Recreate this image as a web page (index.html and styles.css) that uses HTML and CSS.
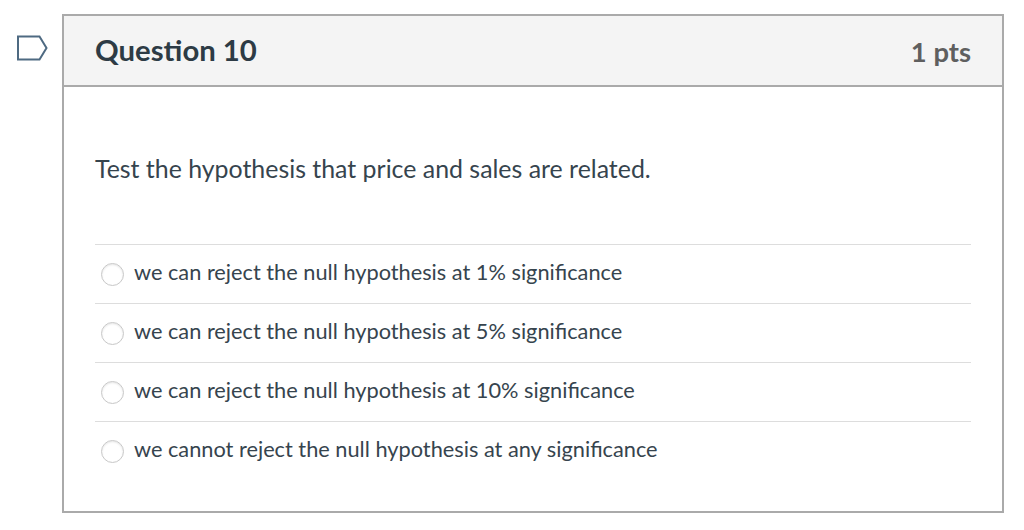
FILE: index.html
```html
<!DOCTYPE html>
<html lang="en">
<head>
    <meta charset="UTF-8">
    <title>Question 10</title>
    <link rel="stylesheet" href="styles.css">
</head>
<body>
    <div class="page">
        <div class="flag">
            <svg width="32" height="26" viewBox="0 0 32 26">
                <path d="M2 1.5H23.5L30.5 13L23.5 24.5H2Z" fill="none" stroke="#4e6a82" stroke-width="2"/>
            </svg>
        </div>
        <div class="question">
            <div class="question-header">
                <h2>Question 10</h2>
                <span class="pts">1 pts</span>
            </div>
            <div class="question-body">
                <p class="question-text">Test the hypothesis that price and sales are related.</p>
                <div class="answers">
                    <label class="answer"><span class="radio"></span><span class="answer-text">we can reject the null hypothesis at 1% significance</span></label>
                    <label class="answer"><span class="radio"></span><span class="answer-text">we can reject the null hypothesis at 5% significance</span></label>
                    <label class="answer"><span class="radio"></span><span class="answer-text">we can reject the null hypothesis at 10% significance</span></label>
                    <label class="answer"><span class="radio"></span><span class="answer-text">we cannot reject the null hypothesis at any significance</span></label>
                </div>
            </div>
        </div>
    </div>
</body>
</html>
```

FILE: styles.css
```css
body {
    font-family: 'Lato', sans-serif;
    background-color: #fff;
    color: #36444e;
    margin: 0;
    padding: 0;
}
.page {
    display: flex;
    align-items: flex-start;
    padding: 14px 20px 0 16px;
}
.flag {
    width: 46px;
    padding-top: 21px;
    flex-shrink: 0;
}
.flag svg {
    display: block;
}
.question {
    flex: 1;
    height: 499px;
    box-sizing: border-box;
    border: 2px solid #aaa;
}
.question-header {
    display: flex;
    justify-content: space-between;
    align-items: center;
    height: 71px;
    box-sizing: border-box;
    padding: 0 31px;
    background-color: #f4f4f4;
    border-bottom: 2px solid #aaa;
}
.question-header h2 {
    font-size: 29.3px;
    font-weight: bold;
    color: #2d3b45;
    margin: 0 0 3px;
}
.pts {
    font-size: 27.4px;
    font-weight: bold;
    color: #5f5f5f;
    margin-top: 1px;
}
.question-body {
    padding: 0 31px;
}
.question-text {
    font-size: 24.9px;
    line-height: 30px;
    margin: 66px 0 61px;
}
.answer {
    display: flex;
    align-items: center;
    height: 58px;
    border-top: 1px solid #ddd;
    font-size: 21.75px;
}
.answer-text {
    margin-bottom: 4px;
}
.radio {
    width: 21px;
    height: 21px;
    margin: 1px 10px 0 6px;
    border: 1px solid #c8c8c8;
    border-radius: 50%;
    box-shadow: inset 0 1px 2px rgba(0, 0, 0, 0.1);
    flex-shrink: 0;
}
```
